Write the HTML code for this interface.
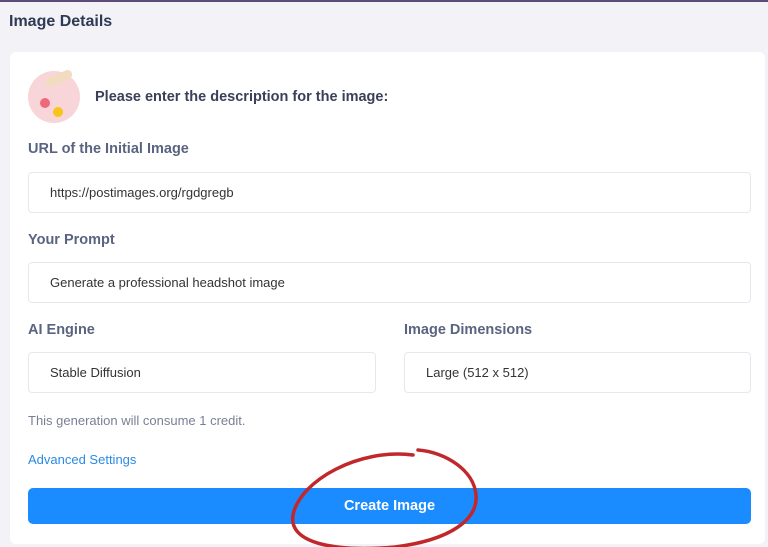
<!DOCTYPE html>
<html><head><style>
body{margin:0;width:768px;height:547px;overflow:hidden;background:#f3f3f7;font-family:"Liberation Sans",sans-serif;position:relative}
.top{position:absolute;left:0;top:0;width:768px;height:2px;background:#5b4a7a}
h1{position:absolute;left:9px;top:13px;margin:0;font-size:16px;font-weight:bold;color:#2f3a55}
.card{position:absolute;left:10px;top:52px;width:755px;height:492px;background:#fff;border-radius:6px}
.lbl{position:absolute;font-size:14.5px;font-weight:bold;color:#5a6480}
.inp{position:absolute;height:41px;border:1px solid #e6e8ee;border-radius:4px;box-sizing:border-box;font-size:13px;color:#333;padding-left:21px;line-height:40px;background:#fff}
.btn{position:absolute;left:28px;top:488px;width:723px;height:36px;background:#1a8cff;border-radius:5px;color:#fff;font-weight:bold;font-size:14.5px;text-align:center;line-height:36px}
</style></head><body>
<div class="top"></div>
<h1>Image Details</h1>
<div class="card"></div>
<div style="position:absolute;left:28px;top:71px;width:52px;height:52px;border-radius:50%;background:#f8d5d8"></div>
<div style="position:absolute;left:45px;top:74px;width:28px;height:9px;background:#f2dcc0;border-radius:5px;transform:rotate(-25deg)"></div>
<div style="position:absolute;left:40px;top:98px;width:10px;height:10px;border-radius:50%;background:#ee6a7a"></div>
<div style="position:absolute;left:53px;top:107px;width:10px;height:10px;border-radius:50%;background:#f5c518"></div>
<div class="lbl" style="left:95px;top:89px;color:#3a4058;font-size:14.5px">Please enter the description for the image:</div>
<div class="lbl" style="left:28px;top:141px">URL of the Initial Image</div>
<div class="inp" style="left:28px;top:172px;width:723px">https://postimages.org/rgdgregb</div>
<div class="lbl" style="left:28px;top:232px">Your Prompt</div>
<div class="inp" style="left:28px;top:262px;width:723px">Generate a professional headshot image</div>
<div class="lbl" style="left:28px;top:322px">AI Engine</div>
<div class="lbl" style="left:404px;top:322px">Image Dimensions</div>
<div class="inp" style="left:28px;top:352px;width:348px">Stable Diffusion</div>
<div class="inp" style="left:404px;top:352px;width:347px">Large (512 x 512)</div>
<div style="position:absolute;left:28px;top:413px;font-size:13px;color:#7a8094">This generation will consume 1 credit.</div>
<div style="position:absolute;left:28px;top:452px;font-size:13px;color:#2a8ae6">Advanced Settings</div>
<div class="btn">Create Image</div>
<svg style="position:absolute;left:0;top:0" width="768" height="547"><path d="M413 455 C360 448 300 480 293 515 C288 545 340 552 395 547 C450 540 478 520 476 495 C474 470 445 452 418 450" fill="none" stroke="#c0282c" stroke-width="3.5" stroke-linecap="round"/></svg>
</body></html>
